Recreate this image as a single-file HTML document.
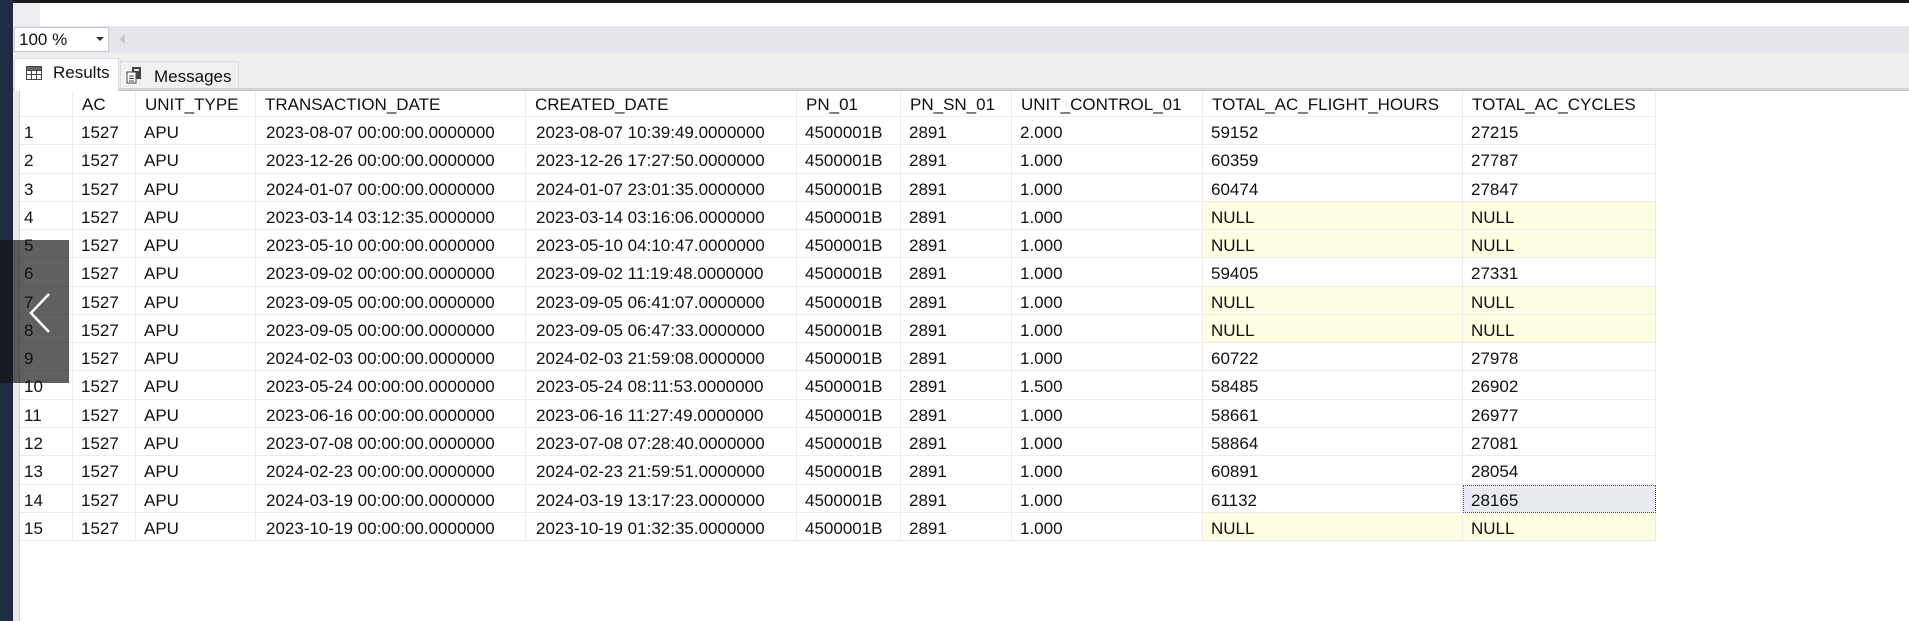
<!DOCTYPE html>
<html><head><meta charset="utf-8"><style>
*{margin:0;padding:0;box-sizing:border-box}
body{width:1909px;height:621px;overflow:hidden;background:#fff;position:relative;font-family:"Liberation Sans",Arial,sans-serif;color:#111}
.abs{position:absolute}
.cell{position:absolute;font-size:17px;line-height:31px;white-space:nowrap;padding-left:7px;border-right:1px solid #ececec;border-bottom:1px solid #ececec;height:28.27px}
</style></head><body>
<div class="abs" style="left:0;top:0;width:1909px;height:3px;background:#1a1a1a"></div>
<div class="abs" style="left:0;top:3px;width:1909px;height:23px;background:#fff"></div>
<div class="abs" style="left:13px;top:3px;width:27px;height:23px;background:#eeeef2"></div>
<div class="abs" style="left:0;top:26px;width:1909px;height:27px;background:#e6e6ec"></div>
<div class="abs" style="left:14px;top:27px;width:95px;height:25px;background:#fff;border:1px solid #c8c8d0;font-size:17px;line-height:24px;padding-left:4px">100 %</div>
<div class="abs" style="left:96px;top:37px;width:0;height:0;border-left:4px solid transparent;border-right:4px solid transparent;border-top:4px solid #333"></div>
<div class="abs" style="left:119px;top:34px;width:0;height:0;border-top:5px solid transparent;border-bottom:5px solid transparent;border-right:6px solid #c8c8cc"></div>
<div class="abs" style="left:0;top:53px;width:1909px;height:35px;background:#efefef"></div>
<div class="abs" style="left:0;top:88px;width:1909px;height:3px;background:#d4d4d4;border-bottom:1px solid #bdbdbd"></div>
<div class="abs" style="left:14px;top:58px;width:105px;height:33px;background:#fff;border:1px solid #dcdcdc;border-bottom:none;font-size:17px;line-height:28px;padding-left:38px">Results</div>
<svg class="abs" style="left:26px;top:66px" width="16" height="14" viewBox="0 0 16 14"><rect x="0.5" y="0.5" width="15" height="13" fill="#fff" stroke="#444"/><path d="M0 4.5H16M0 8.5H16M5.5 0V14M10.5 0V14" stroke="#444"/><rect x="1" y="1" width="14" height="3" fill="#666"/></svg>
<div class="abs" style="left:120px;top:61px;width:119px;height:27px;background:#f0f0f0;border:1px solid #dcdcdc;border-bottom:none;font-size:17px;line-height:29px;padding-left:33px">Messages</div>
<svg class="abs" style="left:126px;top:66px" width="18" height="18" viewBox="0 0 18 18"><rect x="6" y="1" width="9" height="12" fill="#444"/><rect x="8" y="3" width="5" height="2" fill="#ddd"/><rect x="1" y="6" width="9" height="11" fill="#fff" stroke="#444"/><path d="M3 10H8M3 12.5H8M3 15H8" stroke="#444"/></svg>
<div class="abs" style="left:13px;top:91px;width:7px;height:530px;background:#e9e9e9;border-right:1px solid #c8c8c8"></div>
<div id="g" class="abs" style="left:20px;top:91px"></div>
<div class="abs" style="left:0;top:0;width:13px;height:621px;background:#1f2b42"></div>
<div class="abs" style="left:0;top:240px;width:69px;height:143px;background:rgba(20,20,20,0.68)"></div>
<svg class="abs" style="left:28px;top:292px" width="24" height="42" viewBox="0 0 24 42"><path d="M21 2L3 21L21 40" fill="none" stroke="#fff" stroke-width="2.5"/></svg>
<script>
var cols=[20,73,136,256,526,797,901,1012,1203,1463,1656];
var head=["","AC","UNIT_TYPE","TRANSACTION_DATE","CREATED_DATE","PN_01","PN_SN_01","UNIT_CONTROL_01","TOTAL_AC_FLIGHT_HOURS","TOTAL_AC_CYCLES"];
var d=[["2023-08-07 00:00:00.0000000","2023-08-07 10:39:49.0000000","2.000","59152","27215"],
["2023-12-26 00:00:00.0000000","2023-12-26 17:27:50.0000000","1.000","60359","27787"],
["2024-01-07 00:00:00.0000000","2024-01-07 23:01:35.0000000","1.000","60474","27847"],
["2023-03-14 03:12:35.0000000","2023-03-14 03:16:06.0000000","1.000","NULL","NULL"],
["2023-05-10 00:00:00.0000000","2023-05-10 04:10:47.0000000","1.000","NULL","NULL"],
["2023-09-02 00:00:00.0000000","2023-09-02 11:19:48.0000000","1.000","59405","27331"],
["2023-09-05 00:00:00.0000000","2023-09-05 06:41:07.0000000","1.000","NULL","NULL"],
["2023-09-05 00:00:00.0000000","2023-09-05 06:47:33.0000000","1.000","NULL","NULL"],
["2024-02-03 00:00:00.0000000","2024-02-03 21:59:08.0000000","1.000","60722","27978"],
["2023-05-24 00:00:00.0000000","2023-05-24 08:11:53.0000000","1.500","58485","26902"],
["2023-06-16 00:00:00.0000000","2023-06-16 11:27:49.0000000","1.000","58661","26977"],
["2023-07-08 00:00:00.0000000","2023-07-08 07:28:40.0000000","1.000","58864","27081"],
["2024-02-23 00:00:00.0000000","2024-02-23 21:59:51.0000000","1.000","60891","28054"],
["2024-03-19 00:00:00.0000000","2024-03-19 13:17:23.0000000","1.000","61132","28165"],
["2023-10-19 00:00:00.0000000","2023-10-19 01:32:35.0000000","1.000","NULL","NULL"]];
var h="";
function c(i,y,t,bg,extra){h+='<div class="cell" style="left:'+(cols[i]-20)+'px;top:'+y+'px;width:'+(cols[i+1]-cols[i])+'px;'+(bg?'background:'+bg+';':'')+(extra||'')+'">'+t+'</div>';}
for(var i=0;i<10;i++)c(i,0,head[i],"",'height:26px;line-height:28px;padding-left:'+(i==0?7:9)+'px;');
for(var r=0;r<15;r++){var y=26+r*28.27,x=d[r],nul=x[3]=="NULL";
var v=[String(r+1),"1527","APU",x[0],x[1],"4500001B","2891",x[2],x[3],x[4]];
for(var i=0;i<10;i++){var bg=(nul&&i>=8)?"#fefee2":"";var ex='padding-left:'+(i==0?4:(i==3||i==4?10:8))+'px;';
if(r==13&&i==9){bg="#e7ebf0";ex+="outline:1px dotted #555;outline-offset:-1px;";}
c(i,y,v[i],bg,ex);}}
document.getElementById("g").innerHTML=h;
</script>
</body></html>
